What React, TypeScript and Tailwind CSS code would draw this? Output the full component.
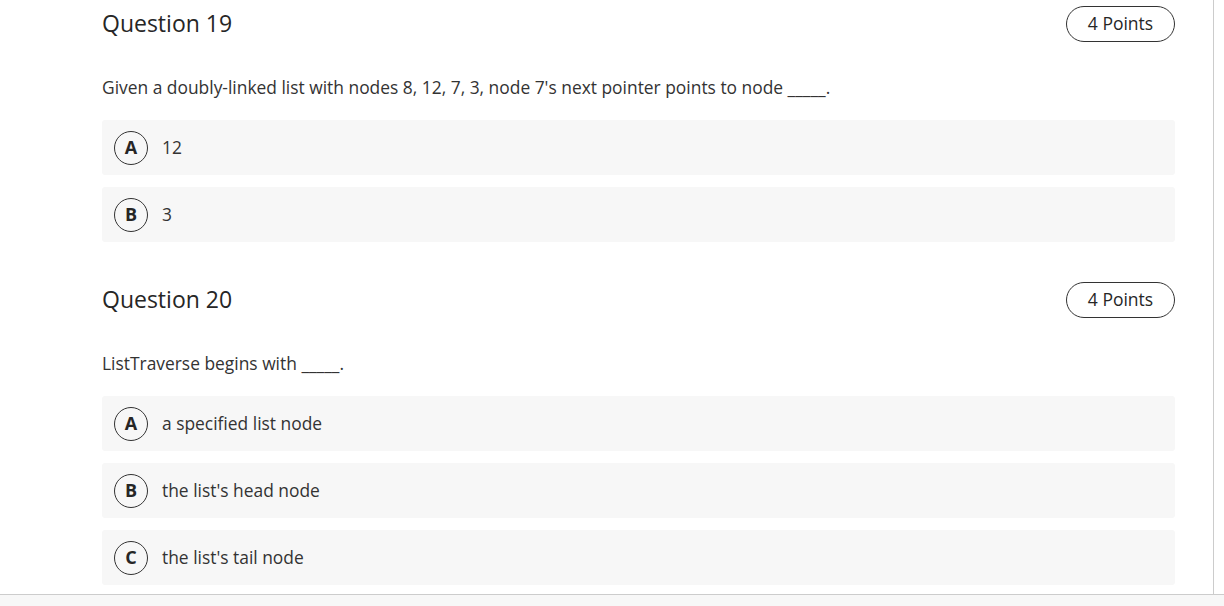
import React from "react";

const font = { fontFamily: '"Open Sans", "Noto Sans", sans-serif' };

function Option({ letter, text }: { letter: string; text: string }) {
  return (
    <div className="flex h-[55px] items-center rounded-[3px] bg-[#f7f7f7] pl-[12px]">
      <div className="flex h-[34px] w-[34px] items-center justify-center rounded-full border border-[#333] text-[18px] font-bold text-[#262626]">
        {letter}
      </div>
      <div className="ml-[14px] text-[17.4px] text-[#333]">{text}</div>
    </div>
  );
}

function Question({
  num,
  text,
  options,
}: {
  num: number;
  text: string;
  options: string[];
}) {
  const letters = ["A", "B", "C", "D"];
  return (
    <div className="flex flex-col">
      <div className="flex h-[35px] items-center justify-between">
        <div className="text-[23px] text-[#262626]">Question {num}</div>
        <div className="flex h-[36px] w-[109px] items-center justify-center rounded-full border border-[#333] text-[17.5px] font-medium text-[#262626]">
          4 Points
        </div>
      </div>
      <div className="mt-[34px] h-[24px] text-[17.4px] leading-[24px] text-[#333]">{text}</div>
      <div className="mt-[21px] flex flex-col gap-[12px]">
        {options.map((o, i) => (
          <Option key={i} letter={letters[i]} text={o} />
        ))}
      </div>
    </div>
  );
}

export default function App() {
  return (
    <div className="flex h-[606px] w-[1224px] flex-col overflow-hidden bg-white" style={font}>
      <div className="h-[594px] w-[1214px] shrink-0 overflow-hidden border-r border-[#cccccc] pl-[102px] pr-[38px] pt-[6px]">
        <div className="flex flex-col gap-[40px]">
          <Question
            num={19}
            text="Given a doubly-linked list with nodes 8, 12, 7, 3, node 7's next pointer points to node _____."
            options={["12", "3"]}
          />
          <Question
            num={20}
            text="ListTraverse begins with _____."
            options={["a specified list node", "the list's head node", "the list's tail node"]}
          />
        </div>
      </div>
      <div className="flex-1 border-t border-[#cccccc] bg-[#f7f7f7]" />
    </div>
  );
}
